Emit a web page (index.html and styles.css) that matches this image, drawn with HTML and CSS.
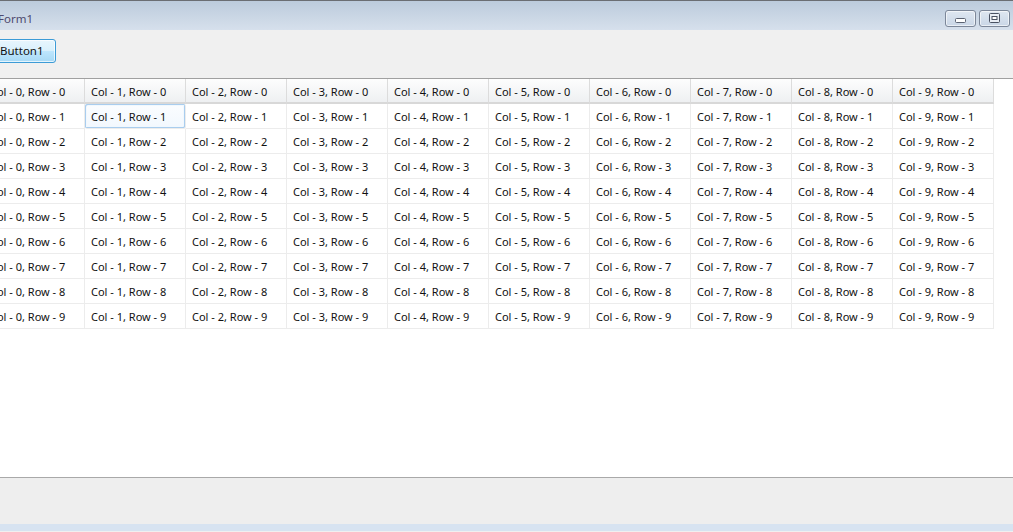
FILE: index.html
```html
<!DOCTYPE html>
<html>
<head>
<meta charset="utf-8">
<link rel="stylesheet" href="styles.css">
</head>
<body>
<div class="window">
  <div class="titlebar">
    <span class="title">Form1</span>
    <div class="caption-buttons">
      <div class="cap-btn">
        <svg width="12" height="6" viewBox="0 0 12 6"><rect x="0.5" y="0.5" width="10" height="4" rx="1" fill="#fff" stroke="#5b6272"/></svg>
      </div>
      <div class="cap-btn">
        <svg width="12" height="11" viewBox="0 0 12 11"><rect x="0.5" y="0.5" width="10" height="9" rx="1" fill="#e9eef5" stroke="#4a5263"/><rect x="3" y="3.5" width="5" height="3" fill="#fff" stroke="#4a5263" stroke-width="1"/></svg>
      </div>
    </div>
  </div>
  <div class="toolbar">
    <button class="btn">Button1</button>
  </div>
  <div class="grid-area">
    <div class="grid" id="grid"></div>
  </div>
  <div class="footer"></div>
  <div class="strip"></div>
</div>
<script>
  var g = document.getElementById('grid');
  var html = '';
  for (var r = 0; r < 10; r++) {
    for (var c = 0; c < 10; c++) {
      var cls = 'cell' + (r === 0 ? ' head' : '') + (r === 1 && c === 1 ? ' sel' : '');
      html += '<div class="' + cls + '"><span>Col - ' + c + ', Row - ' + r + '</span></div>';
    }
  }
  g.innerHTML = html;
</script>
</body>
</html>
```
FILE: styles.css
```css
* { box-sizing: border-box; }
html, body { margin: 0; padding: 0; }
body {
  width: 1013px;
  height: 532px;
  overflow: hidden;
  font-family: "Segoe UI", "Noto Sans", "Open Sans", sans-serif;
  font-size: 11px;
  color: #111;
  background: #f0f0f0;
}
.window { display: flex; flex-direction: column; height: 532px; }
.titlebar {
  height: 30px;
  border-top: 1px solid #6b6e73;
  background: linear-gradient(#bccbdc, #d6e0ec);
  display: flex;
  justify-content: space-between;
  align-items: flex-start;
}
.title {
  color: #4e4a6e;
  font-size: 11.5px;
  margin-left: -2px;
  margin-top: 10px;
  line-height: 16px;
}
.caption-buttons {
  display: flex;
  gap: 3px;
  margin-top: 9px;
  margin-right: 3px;
}
.cap-btn {
  width: 31px;
  height: 17px;
  border: 1px solid #7c8799;
  border-radius: 3px;
  background: linear-gradient(#dfe7f1, #c9d6e6);
  box-shadow: inset 0 0 0 1px rgba(255,255,255,0.6);
  display: flex;
  align-items: center;
  justify-content: center;
}
.cap-btn:first-child svg { margin-top: 4px; }
.toolbar {
  height: 48px;
  background: #f0f0f0;
  padding-top: 9px;
}
.btn {
  display: block;
  margin-left: -20px;
  width: 76px;
  height: 24px;
  border: 1px solid #3c9bd6;
  border-radius: 3px;
  background: linear-gradient(#e8f6fd 0%, #d9f0fc 50%, #bee6fd 51%, #a7d9f5 100%);
  box-shadow: inset 0 0 0 1px rgba(255,255,255,0.7);
  font-family: inherit;
  font-size: 11.5px;
  color: #111;
  text-align: left;
  padding: 0 0 1px 19px;
  white-space: nowrap;
}
.grid-area {
  height: 400px;
  background: #fff;
  border-top: 1px solid #a0a0a0;
  border-bottom: 1px solid #a9a9a9;
}
.grid {
  display: grid;
  grid-template-columns: repeat(10, 101px);
  grid-auto-rows: 25px;
  margin-left: -16px;
  width: 1010px;
}
.cell {
  border-right: 1px solid #ececec;
  border-bottom: 1px solid #ececec;
  padding-left: 6px;
  padding-top: 1px;
  display: flex;
  align-items: center;
  white-space: nowrap;
}
.cell.head {
  background: linear-gradient(#fdfdfd, #eef0f2);
  border-right-color: #dcdcdc;
  border-bottom: 2px solid #d8d8d8;
}
.cell.sel {
  box-shadow: inset 1px 1px 0 0 #a9cdee, inset -1px -1px 0 0 #a9cdee, inset 0 0 0 2px #f1f8fe;
  border-radius: 2px;
  background: linear-gradient(#fbfdff, #f2f8fe);
}
.footer {
  height: 46px;
  background: #eeeeee;
}
.strip {
  height: 7px;
  background: #d7e3f1;
}
```
